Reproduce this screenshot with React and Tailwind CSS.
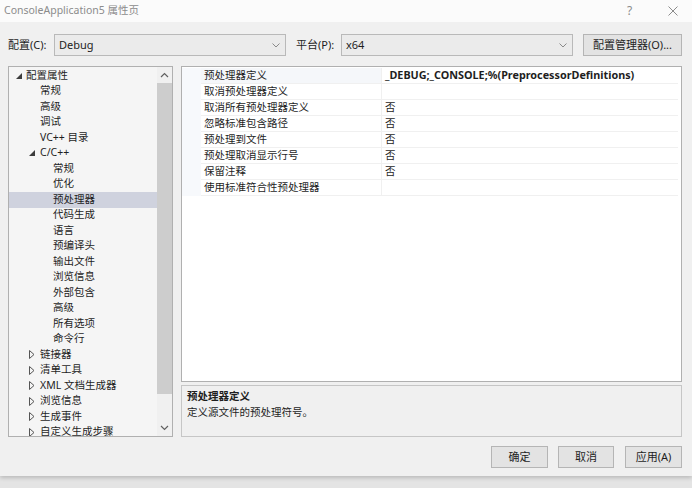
import React from "react";

const F = "font-['Noto_Sans','Noto_Sans_CJK_SC',sans-serif]";

const tree = [
  { t: "配置属性", l: 0, tri: "open" },
  { t: "常规", l: 1 },
  { t: "高级", l: 1 },
  { t: "调试", l: 1 },
  { t: "VC++ 目录", l: 1 },
  { t: "C/C++", l: 1, tri: "open" },
  { t: "常规", l: 2 },
  { t: "优化", l: 2 },
  { t: "预处理器", l: 2, sel: true },
  { t: "代码生成", l: 2 },
  { t: "语言", l: 2 },
  { t: "预编译头", l: 2 },
  { t: "输出文件", l: 2 },
  { t: "浏览信息", l: 2 },
  { t: "外部包含", l: 2 },
  { t: "高级", l: 2 },
  { t: "所有选项", l: 2 },
  { t: "命令行", l: 2 },
  { t: "链接器", l: 1, tri: "closed" },
  { t: "清单工具", l: 1, tri: "closed" },
  { t: "XML 文档生成器", l: 1, tri: "closed" },
  { t: "浏览信息", l: 1, tri: "closed" },
  { t: "生成事件", l: 1, tri: "closed" },
  { t: "自定义生成步骤", l: 1, tri: "closed" },
];

const props = [
  ["预处理器定义", "_DEBUG;_CONSOLE;%(PreprocessorDefinitions)", true],
  ["取消预处理器定义", ""],
  ["取消所有预处理器定义", "否"],
  ["忽略标准包含路径", "否"],
  ["预处理到文件", "否"],
  ["预处理取消显示行号", "否"],
  ["保留注释", "否"],
  ["使用标准符合性预处理器", ""],
];

function Tri({ kind }) {
  if (kind === "open")
    return (
      <svg width="6" height="6" viewBox="0 0 6 6" className="shrink-0">
        <path d="M6 0 L6 6 L0 6 Z" fill="#3c3c3c" />
      </svg>
    );
  return (
    <svg width="6" height="9" viewBox="0 0 6 9" className="shrink-0">
      <path d="M0.5 0.5 L5 4.5 L0.5 8.5 Z" fill="none" stroke="#555" strokeWidth="1" />
    </svg>
  );
}

function Chevron({ up }) {
  return (
    <svg width="9" height="6" viewBox="0 0 9 6">
      <path d={up ? "M1 5 L4.5 1.5 L8 5" : "M1 1 L4.5 4.5 L8 1"} fill="none" stroke="#606060" strokeWidth="1.2" />
    </svg>
  );
}

function Select({ value, w }) {
  return (
    <div className={`${w} h-[22px] border border-[#b9b9b9] bg-[#ebebeb] flex items-center justify-between pl-[4px] pr-[5px]`}>
      <span className="text-[11px] text-[#1e1e1e]">{value}</span>
      <svg width="8" height="5" viewBox="0 0 8 5">
        <path d="M0.5 0.5 L4 4 L7.5 0.5" fill="none" stroke="#8a8a8a" strokeWidth="1" />
      </svg>
    </div>
  );
}

function Btn({ children, w }) {
  return (
    <div className={`${w} h-[22px] border border-[#b5b5b5] bg-[#e3e3e3] flex items-center justify-center text-[11px] text-[#1e1e1e]`}>
      {children}
    </div>
  );
}

export default function App() {
  return (
    <div className={`${F} w-[692px] h-[488px] bg-[#e4e4e4] overflow-hidden`}>
      <div className="w-[692px] h-[476px] bg-[#f0f0f0] flex flex-col shadow-[0_2px_4px_rgba(0,0,0,0.18)]">
        {/* title bar */}
        <div className="h-[22px] bg-[#fbfbfb] flex items-center pl-[4px]">
          <span className="text-[10.5px] text-[#8c8c8c] flex-1">ConsoleApplication5 属性页</span>
          <span className="text-[12px] text-[#8c8c8c] w-[8px] mr-[33px]">?</span>
          <svg width="10" height="10" viewBox="0 0 10 10" className="mr-[14px]">
            <path d="M0.5 0.5 L9.5 9.5 M9.5 0.5 L0.5 9.5" stroke="#8c8c8c" strokeWidth="1" />
          </svg>
        </div>
        {/* toolbar */}
        <div className="flex items-center mt-[12px] h-[22px] pl-[8px] text-[11px] text-[#1e1e1e]">
          <span className="w-[46px]">配置(C):</span>
          <Select value="Debug" w="w-[232px]" />
          <span className="ml-[10px] w-[45px]">平台(P):</span>
          <Select value="x64" w="w-[232px]" />
          <div className="ml-[10px]">
            <Btn w="w-[99px]">配置管理器(O)...</Btn>
          </div>
        </div>
        {/* main */}
        <div className="flex mt-[10px] pl-[8px] h-[371px]">
          {/* tree */}
          <div className="w-[165px] h-[371px] border border-[#b0b0b0] bg-[#f5f5f5] flex">
            <div className="flex-1 pt-[1px] overflow-hidden">
              {tree.map((r, i) => (
                <div
                  key={i}
                  className={`h-[15.5px] flex items-center text-[10.5px] text-[#1e1e1e] whitespace-nowrap ${r.sel ? "bg-[#cfd2de]" : ""}`}
                >
                  <div
                    className={`${r.l === 0 ? "w-[17px] pl-[7px]" : r.l === 1 ? "w-[31px] pl-[20px]" : "w-[44px]"} flex items-center shrink-0`}
                  >
                    {r.tri && <Tri kind={r.tri} />}
                  </div>
                  <span>{r.t}</span>
                </div>
              ))}
            </div>
            <div className="w-[15px] bg-[#f0f0f0] flex flex-col items-center">
              <div className="h-[16px] flex items-center justify-center">
                <Chevron up />
              </div>
              <div className="w-[15px] h-[311px] bg-[#cdcdcd]" />
              <div className="flex-1" />
              <div className="h-[16px] flex items-center justify-center">
                <Chevron />
              </div>
            </div>
          </div>
          {/* right */}
          <div className="ml-[8px] w-[501px] flex flex-col">
            <div className="h-[316px] border border-[#b0b0b0] bg-white pt-[1px] flex">
              <div className="w-[19px] bg-[#f7f9fc] h-[128px]" />
              <div className="flex-1 pr-[3px]">
                {props.map(([n, v, b], i) => (
                  <div key={i} className={`h-[16px] flex border-b border-[#f0f0f0] text-[10.5px] text-[#1e1e1e] ${i === 0 ? "bg-[#f5f7fa]" : ""}`}>
                    <div className="w-[181px] pl-[3px] flex items-center border-r border-[#f0f0f0]">{n}</div>
                    <div className={`flex-1 pl-[3px] flex items-center ${b ? "font-bold bg-white text-[10.8px]" : ""}`}>{v}</div>
                  </div>
                ))}
              </div>
            </div>
            <div className="mt-[3px] h-[52px] border border-[#c6c6c6] bg-[#f0f0f0] px-[5px] pt-[2px] text-[10.5px] text-[#1e1e1e]">
              <div className="font-bold leading-[16px]">预处理器定义</div>
              <div className="leading-[16px]">定义源文件的预处理符号。</div>
            </div>
          </div>
        </div>
        {/* buttons */}
        <div className="flex justify-end mt-[9px] pr-[10px] gap-[10px]">
          <Btn w="w-[57px]">确定</Btn>
          <Btn w="w-[56px]">取消</Btn>
          <div className="ml-[1px]">
            <Btn w="w-[57px]">应用(A)</Btn>
          </div>
        </div>
      </div>
    </div>
  );
}
